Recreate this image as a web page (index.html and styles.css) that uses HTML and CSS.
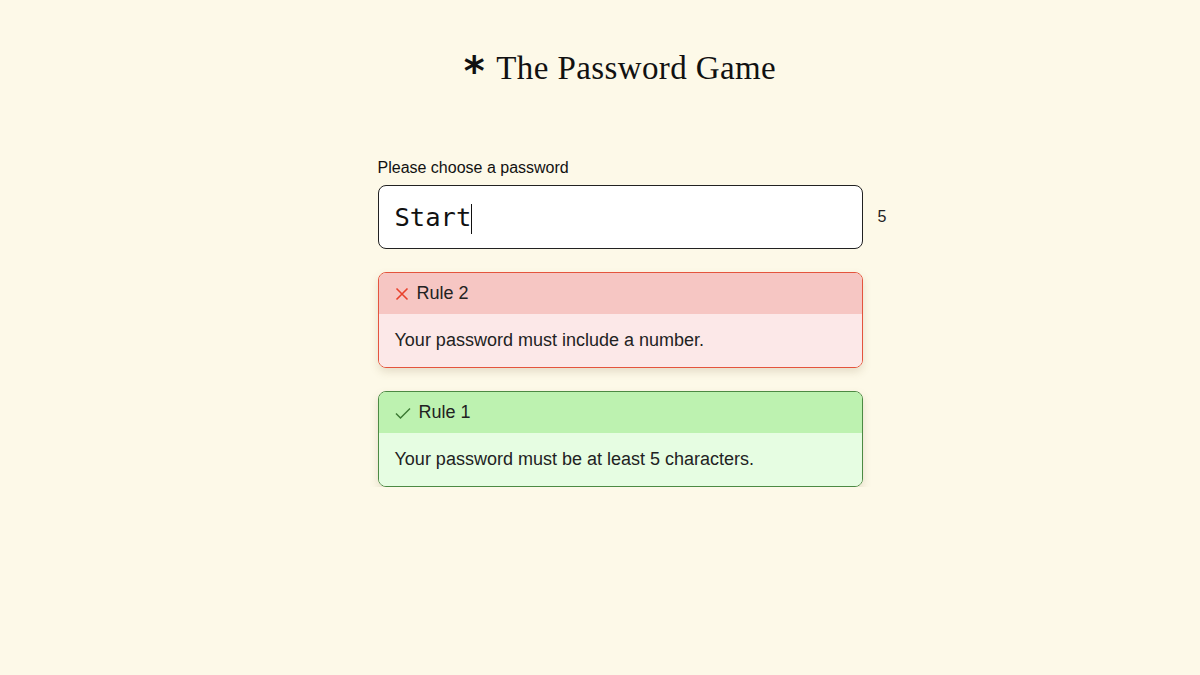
FILE: index.html
```html
<!DOCTYPE html>
<html lang="en">
<head>
  <meta charset="UTF-8" />
  <meta name="viewport" content="width=device-width, initial-scale=1.0"/>
  <title>The Password Game</title>
  <link rel="stylesheet" href="styles.css">
</head>
<body>

<div class="page">
  <h1 class="title"><span class="star">*</span> The Password Game</h1>

  <div class="game">
    <div class="label">Please choose a password</div>
    <div class="pw-row">
      <div class="pw-box">Start<span class="caret"></span></div>
      <div class="count">5</div>
    </div>

    <div class="rule bad">
      <div class="rule-top">
        <svg class="icon" width="14" height="14" viewBox="0 0 14 14"><path d="M1.5 1.5L12.5 12.5M12.5 1.5L1.5 12.5" stroke="#e8412c" stroke-width="1.6" fill="none"/></svg>
        Rule 2
      </div>
      <div class="rule-desc">Your password must include a number.</div>
    </div>

    <div class="rule good">
      <div class="rule-top">
        <svg class="icon" width="16" height="14" viewBox="0 0 16 14"><path d="M1 7.5L5.5 12L15 2.5" stroke="#3d7a34" stroke-width="1.5" fill="none"/></svg>
        Rule 1
      </div>
      <div class="rule-desc">Your password must be at least 5 characters.</div>
    </div>
  </div>
</div>

</body>
</html>
```

FILE: styles.css
```css
body {
  margin: 0;
  background-color: #fdf9e8;
  font-family: "Liberation Sans", Arial, sans-serif;
  color: #222;
}
.page {
  padding: 42px 0 0 40px;
}
.title {
  margin: 0;
  text-align: center;
  font-family: "Liberation Serif", "Times New Roman", serif;
  font-weight: normal;
  font-size: 33px;
  color: #111;
  letter-spacing: 0.4px;
}
.star {
  font-family: "DejaVu Sans", sans-serif;
  font-weight: bold;
  font-size: 40px;
  position: relative;
  top: 6px;
  margin-right: 3px;
}
.game {
  width: 485px;
  margin: 0 auto;
  padding-top: 71px;
}
.label {
  font-size: 16px;
  color: #111;
  margin-bottom: 8px;
}
.pw-row {
  position: relative;
}
.pw-box {
  box-sizing: border-box;
  height: 64px;
  border: 1px solid #222;
  border-radius: 8px;
  background: #fff;
  padding: 16px 16px 0;
  font-family: "DejaVu Sans Mono", "Liberation Mono", monospace;
  font-size: 25.5px;
  color: #111;
  display: flex;
  align-items: flex-start;
}
.caret {
  display: inline-block;
  width: 1px;
  height: 30px;
  background: #111;
  margin-top: 2px;
}
.count {
  position: absolute;
  left: 500px;
  top: 23px;
  font-size: 16px;
}
.rule {
  margin-top: 23px;
  border-radius: 8px;
  overflow: hidden;
  font-size: 18px;
  box-shadow: 0 4px 8px rgba(120, 100, 60, 0.18);
}
.rule-top {
  height: 41px;
  display: flex;
  align-items: center;
  padding-left: 16px;
  gap: 8px;
}
.rule-desc {
  height: 53px;
  display: flex;
  align-items: center;
  padding-left: 16px;
}
.bad {
  border: 1px solid #e4543d;
}
.bad .rule-top {
  background: #f6c6c3;
}
.bad .rule-desc {
  background: #fce8e8;
}
.good {
  border: 1px solid #4c8a43;
}
.good .rule-top {
  background: #bdf2b0;
}
.good .rule-desc {
  background: #e6fde2;
}
```
